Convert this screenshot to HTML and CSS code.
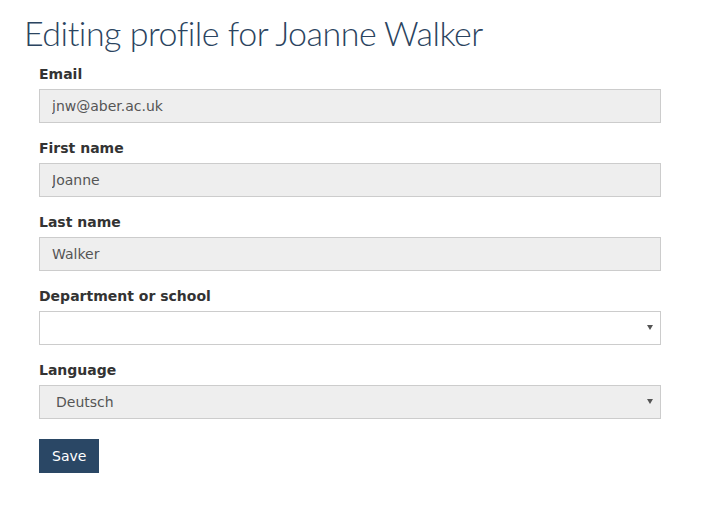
FILE: index.html
```html
<!DOCTYPE html>
<html>
<head>
<meta charset="utf-8">
<link rel="stylesheet" href="styles.css">
</head>
<body>
<div class="page">
  <h1 class="title">Editing profile for Joanne Walker</h1>
  <form class="form">
    <div class="group">
      <label class="label">Email</label>
      <input class="control readonly" type="text" value="jnw@aber.ac.uk" readonly>
    </div>
    <div class="group">
      <label class="label">First name</label>
      <input class="control readonly" type="text" value="Joanne" readonly>
    </div>
    <div class="group">
      <label class="label">Last name</label>
      <input class="control readonly" type="text" value="Walker" readonly>
    </div>
    <div class="group">
      <label class="label">Department or school</label>
      <div class="select-wrap">
        <select class="control select"><option></option></select>
        <span class="arrow"></span>
      </div>
    </div>
    <div class="group">
      <label class="label">Language</label>
      <div class="select-wrap">
        <select class="control select readonly"><option>Deutsch</option></select>
        <span class="arrow"></span>
      </div>
    </div>
    <button class="btn" type="button">Save</button>
  </form>
</div>
</body>
</html>
```
FILE: styles.css
```css
html, body { margin: 0; padding: 0; background: #fff; }
.page { padding: 13px 0 0 24px; }
.title {
  margin: 0 0 11px 0;
  font-family: "Lato", "Open Sans", sans-serif;
  font-weight: 300;
  font-size: 34px;
  line-height: 40px;
  letter-spacing: -0.5px;
  color: #2b4460;
}
.form { width: 622px; margin-left: 15px; }
.group { margin-bottom: 15px; }
.label {
  display: block;
  font-family: "DejaVu Sans", Verdana, sans-serif;
  font-weight: 700;
  font-size: 14px;
  line-height: 20px;
  color: #333;
  margin-bottom: 5px;
}
.control {
  display: block;
  box-sizing: border-box;
  width: 100%;
  height: 34px;
  margin: 0;
  padding: 0 12px;
  border: 1px solid #ccc;
  border-radius: 0;
  background: #fff;
  font-family: "DejaVu Sans", Verdana, sans-serif;
  font-size: 14px;
  color: #555;
  outline: none;
}
.readonly { background: #eee; }
.select-wrap { position: relative; }
.select { appearance: none; -webkit-appearance: none; padding-left: 16px; }
.arrow {
  position: absolute;
  right: 8px;
  top: 14px;
  width: 0; height: 0;
  border-left: 3px solid transparent;
  border-right: 3px solid transparent;
  border-top: 5px solid #555;
}
.btn {
  margin-top: 5px;
  height: 34px;
  padding: 0 13px;
  border: none;
  border-radius: 0;
  background: #2a4765;
  color: #fff;
  font-family: "DejaVu Sans", Verdana, sans-serif;
  font-size: 14px;
}
```
